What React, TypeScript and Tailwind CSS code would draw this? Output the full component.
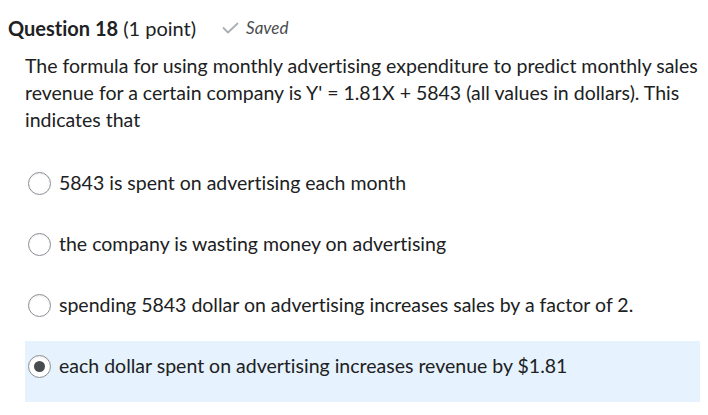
import React from "react";

function Radio({ checked }: { checked?: boolean }) {
  return (
    <span className="flex h-[23px] w-[23px] shrink-0 items-center justify-center rounded-full border border-[#8a8f94] bg-white shadow-[inset_0_1px_2px_rgba(0,0,0,0.08)]">
      {checked && <span className="h-[11px] w-[11px] rounded-full bg-[#494c4e]" />}
    </span>
  );
}

const options = [
  "5843 is spent on advertising each month",
  "the company is wasting money on advertising",
  "spending 5843 dollar on advertising increases sales by a factor of 2.",
  "each dollar spent on advertising increases revenue by $1.81",
];

export default function App() {
  return (
    <div className="h-[415px] w-[708px] overflow-hidden bg-white text-[#202122] [font-variant-ligatures:none]" style={{ fontFamily: "Lato, 'Noto Sans', sans-serif" }}>
      <div className="flex items-center pl-[8px] pt-[15px]">
        <span className="text-[20px] font-bold leading-[26px]">Question 18</span>
        <span className="ml-[5px] text-[20px] leading-[26px]">(1 point)</span>
        <span className="ml-[26px] flex items-center gap-[7px] text-[#494c4e]">
          <svg width="17" height="12" viewBox="0 0 17 12" fill="none">
            <path d="M1.5 6 L6 10.5 L15.5 1.5" stroke="#a8b0b6" strokeWidth="1.8" strokeLinecap="round" strokeLinejoin="round" />
          </svg>
          <span className="text-[17px] italic leading-[26px]">Saved</span>
        </span>
      </div>
      <p className="mt-[11px] pl-[25px] pr-[8px] text-[19.5px] leading-[27px]">
        The formula for using monthly advertising expenditure to predict monthly sales revenue for a certain company is Y' = 1.81X + 5843 (all values in dollars). This indicates that
      </p>
      <div className="mt-[25px] ml-[25px] w-[675px]">
        {options.map((o, i) => (
          <div
            key={i}
            className={`flex h-[61px] items-start pl-[3px] pt-[13px] ${i === 3 ? "bg-[#e6f2fd]" : ""}`}
          >
            <div className="flex items-center gap-[8px]">
              <Radio checked={i === 3} />
              <span className="text-[19.5px] leading-[24px]">{o}</span>
            </div>
          </div>
        ))}
      </div>
    </div>
  );
}
